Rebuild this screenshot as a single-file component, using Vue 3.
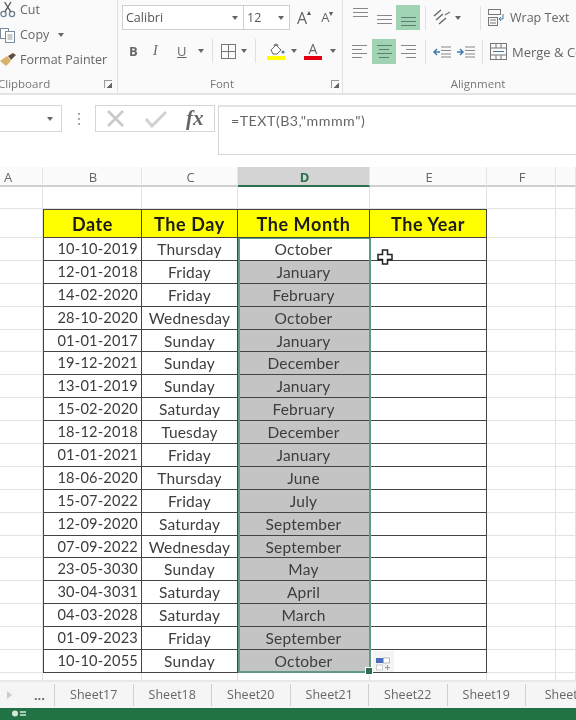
<script setup>
const columns = ["A", "B", "C", "D", "E", "F", ""];

const rows = [
  ["10-10-2019", "Thursday", "October"],
  ["12-01-2018", "Friday", "January"],
  ["14-02-2020", "Friday", "February"],
  ["28-10-2020", "Wednesday", "October"],
  ["01-01-2017", "Sunday", "January"],
  ["19-12-2021", "Sunday", "December"],
  ["13-01-2019", "Sunday", "January"],
  ["15-02-2020", "Saturday", "February"],
  ["18-12-2018", "Tuesday", "December"],
  ["01-01-2021", "Friday", "January"],
  ["18-06-2020", "Thursday", "June"],
  ["15-07-2022", "Friday", "July"],
  ["12-09-2020", "Saturday", "September"],
  ["07-09-2022", "Wednesday", "September"],
  ["23-05-3030", "Sunday", "May"],
  ["30-04-3031", "Saturday", "April"],
  ["04-03-2028", "Saturday", "March"],
  ["01-09-2023", "Friday", "September"],
  ["10-10-2055", "Sunday", "October"],
];

const tabs = ["Sheet17", "Sheet18", "Sheet20", "Sheet21", "Sheet22", "Sheet19", "Sheet2"];
</script>

<template>
  <div class="app">
    <section class="ribbon">
      <div class="group clipboard">
        <div class="group-body clip-list">
          <div class="clip-item">
            <svg width="16" height="18" viewBox="0 0 16 18" fill="none" stroke="#6d7f92" stroke-width="1.3">
              <circle cx="3.5" cy="13" r="2.6" />
              <circle cx="12" cy="13" r="2.6" />
              <path d="M4.8 10.8 11 1M10.8 10.8 4.6 1" stroke="#555" />
            </svg>
            <span>Cut</span>
          </div>
          <div class="clip-item">
            <svg width="16" height="16" viewBox="0 0 16 16" fill="#fff" stroke="#7b8a99">
              <rect x="0.5" y="1.5" width="8" height="10" />
              <rect x="5.5" y="4.5" width="9" height="11" />
              <path d="M7.5 8h5M7.5 10h5M7.5 12h5" stroke="#999" />
            </svg>
            <span>Copy</span>
            <i class="arrow copy-arrow"></i>
          </div>
          <div class="clip-item">
            <svg width="16" height="14" viewBox="0 0 16 14">
              <path d="M0 8 7 3l4 5-5 5Z" fill="#d9b36a" />
              <path d="M8 3l5-3 3 2-5 5Z" fill="#5c5140" />
            </svg>
            <span>Format Painter</span>
          </div>
        </div>
        <div class="group-label clip-label">
          <span>Clipboard</span>
          <i class="launcher"></i>
        </div>
      </div>

      <div class="group font-group">
        <div class="group-body">
          <div class="tool-row font-top">
            <div class="combo name-combo">Calibri<i class="arrow"></i></div>
            <div class="combo size-combo">12<i class="arrow"></i></div>
            <span class="grow-a big">A<sup>▴</sup></span>
            <span class="grow-a small">A<sup>▾</sup></span>
          </div>
          <div class="tool-row font-bottom">
            <b class="fmt fmt-b">B</b>
            <em class="fmt fmt-i">I</em>
            <u class="fmt fmt-u">U</u>
            <i class="arrow"></i>
            <span class="sep"></span>
            <svg class="border-icon" width="15" height="15" viewBox="0 0 15 15" fill="none" stroke="#777">
              <rect x="0.5" y="0.5" width="14" height="14" />
              <path d="M7.5 0v15M0 7.5h15" />
            </svg>
            <i class="arrow"></i>
            <span class="sep"></span>
            <svg class="fill-icon" width="20" height="20" viewBox="0 0 20 20">
              <path d="M4 9 9 4l5 5-4 4H6Z" fill="#fff" stroke="#666" />
              <path d="M7 5a2 2 0 0 1 4 0" fill="none" stroke="#666" />
              <circle cx="16" cy="11" r="1.6" fill="#4d7fa8" />
              <rect x="0" y="15" width="18" height="4" fill="#ffff00" />
            </svg>
            <i class="arrow"></i>
            <span class="color-a">A</span>
            <i class="arrow"></i>
          </div>
        </div>
        <div class="group-label font-label">
          <span>Font</span>
          <i class="launcher"></i>
        </div>
      </div>

      <div class="group align-group">
        <div class="group-body">
          <div class="tool-row align-row">
            <span class="lines lines-top"><i></i><i></i><i></i></span>
            <span class="lines lines-mid"><i></i><i></i><i></i></span>
            <span class="lines lines-bot active"><i></i><i></i><i></i></span>
            <span class="sep"></span>
            <svg class="orient" width="18" height="18" viewBox="0 0 18 18" fill="none" stroke="#666">
              <path d="M1 7 8 1M3 11l7-6M6 15l7-6" stroke-width="1.4" />
              <path d="M12 6l5-3" stroke="#5d7f9e" stroke-width="1.4" />
            </svg>
            <i class="arrow"></i>
            <span class="sep wide-sep"></span>
            <svg class="wrap-icon" width="18" height="18" viewBox="0 0 18 18" fill="none" stroke="#777">
              <rect x="0.5" y="0.5" width="12" height="5" />
              <rect x="0.5" y="8.5" width="9" height="8" />
              <path d="M2 11h6M2 14h6" />
              <path d="M15 5v5h-4m2-2-2 2 2 2" stroke="#3d78a8" />
            </svg>
            <span class="wide-label">Wrap Text</span>
          </div>
          <div class="tool-row align-row second">
            <span class="lines left"><i></i><i></i><i></i><i></i></span>
            <span class="lines center active"><i></i><i></i><i></i><i></i></span>
            <span class="lines right"><i></i><i></i><i></i><i></i></span>
            <span class="sep"></span>
            <svg class="indent" width="18" height="12" viewBox="0 0 18 12" fill="none" stroke="#888">
              <path d="M8 1h10M8 4.500h10M8 8h10M8 11h10" />
              <path d="M7 6H1m3-3L1 6l3 3" stroke="#3d78a8" stroke-width="1.4" />
            </svg>
            <svg class="indent" width="18" height="12" viewBox="0 0 18 12" fill="none" stroke="#888">
              <path d="M8 1h10M8 4.500h10M8 8h10M8 11h10" />
              <path d="M0 6h6M3 3l3 3-3 3" stroke="#3d78a8" stroke-width="1.4" />
            </svg>
            <span class="sep indent-sep"></span>
            <svg class="wrap-icon" width="18" height="18" viewBox="0 0 18 18" fill="none" stroke="#777">
              <rect x="0.500" y="0.500" width="16" height="16" />
              <path d="M0 5h17M0 12h17M6 0v5M11 0v5M6 12v5M11 12v5" />
              <path d="M3 8.500h11" stroke="#3d78a8" />
            </svg>
            <span class="wide-label merge-label">Merge &amp; Center</span>
          </div>
        </div>
        <div class="group-label align-label"><span>Alignment</span></div>
      </div>
    </section>

    <section class="formula-bar">
      <div class="name-box"><i class="arrow"></i></div>
      <div class="grip"><i></i><i></i><i></i></div>
      <div class="fx-buttons">
        <svg width="20" height="18" viewBox="0 0 20 18" fill="none" stroke="#c9c9c9" stroke-width="2.600">
          <path d="M2 1l15 15M17 1 2 16" />
        </svg>
        <svg width="22" height="18" viewBox="0 0 22 18" fill="none" stroke="#d2d2d2" stroke-width="3">
          <path d="M1 9l6 7L21 2" />
        </svg>
        <span class="fx">fx</span>
      </div>
      <div class="formula-input">=TEXT(B3,"mmmm")</div>
    </section>

    <section class="sheet">
      <div class="sheet-grid">
        <div
          v-for="(col, i) in columns"
          :key="'col' + i"
          class="col-head"
          :class="{ current: col === 'D', 'col-a': col === 'A' }"
        >{{ col }}</div>

        <div v-for="i in 7" :key="'blank' + i" class="cell"></div>

        <div class="cell"></div>
        <div class="cell boxed title first">Date</div>
        <div class="cell boxed title">The Day</div>
        <div class="cell boxed title">The Month</div>
        <div class="cell boxed title">The Year</div>
        <div class="cell"></div>
        <div class="cell"></div>

        <template v-for="(row, r) in rows" :key="r">
          <div class="cell"></div>
          <div class="cell boxed first date">{{ row[0] }}</div>
          <div class="cell boxed">{{ row[1] }}</div>
          <div class="cell boxed" :class="{ filled: r > 0 }">{{ row[2] }}</div>
          <div class="cell boxed"></div>
          <div class="cell"></div>
          <div class="cell"></div>
        </template>

        <div v-for="i in 7" :key="'end' + i" class="cell last"></div>
      </div>

      <div class="selection"><i class="fill-handle"></i></div>

      <svg class="cursor" width="16" height="16" viewBox="0 0 16 16">
        <path d="M5.500 1h5v4.500H15v5h-4.500V15h-5v-4.500H1v-5h4.500Z" fill="#fff" stroke="#222" stroke-width="1.500" />
      </svg>

      <div class="quick-analysis">
        <svg width="14" height="14" viewBox="0 0 14 14">
          <rect x="0" y="1" width="7" height="5" fill="#4a6fc0" />
          <rect x="7.500" y="1" width="6" height="5" fill="#fff" stroke="#999" stroke-width="0.700" />
          <rect x="0.500" y="8" width="6" height="5" fill="#fff" stroke="#bbb" stroke-width="0.700" />
          <path d="M9 10.500h5M11.500 8v5" stroke="#999" />
        </svg>
      </div>
    </section>

    <section class="tab-bar">
      <span class="tab-prev"></span>
      <span class="tab-more">...</span>
      <div v-for="tab in tabs" :key="tab" class="tab">{{ tab }}</div>
    </section>

    <footer class="status-bar">
      <svg width="16" height="8" viewBox="0 0 16 8">
        <circle cx="4" cy="3.500" r="3" fill="#d5e8dc" />
        <path d="M9 2h6M9 5h6" stroke="#d5e8dc" stroke-width="1.500" />
      </svg>
    </footer>
  </div>
</template>

<style>
html,
body {
  margin: 0;
  background: #fff;
}
</style>

<style scoped>
.app {
  width: 576px;
  height: 720px;
  overflow: hidden;
  background: #fff;
  font-family: "Open Sans", "Liberation Sans", sans-serif;
  color: #555;
  display: flex;
  flex-direction: column;
  filter: blur(0.35px);
}

.arrow {
  display: inline-block;
  width: 0;
  height: 0;
  border-left: 3.500px solid transparent;
  border-right: 3.500px solid transparent;
  border-top: 4px solid #666;
}

/* ribbon */
.ribbon {
  height: 95px;
  box-sizing: border-box;
  border-bottom: 2px solid #e4e4e4;
  background: #fafafa;
  display: flex;
  flex-shrink: 0;
}

.group {
  display: flex;
  flex-direction: column;
  border-right: 1px solid #e2e2e2;
  box-sizing: border-box;
}

.group-body {
  height: 76px;
}

.group-label {
  position: relative;
  text-align: center;
  font-size: 11.500px;
  line-height: 16px;
  color: #777;
}

.launcher {
  position: absolute;
  right: 3px;
  top: 4px;
  width: 7px;
  height: 7px;
  border-left: 1px solid #999;
  border-top: 1px solid #999;
  background: linear-gradient(135deg, transparent 60%, #666 60%);
}

.clipboard {
  width: 118px;
}

.clip-list {
  margin-top: -3px;
}

.clip-item {
  height: 25px;
  display: flex;
  align-items: center;
  gap: 4px;
  font-size: 12.500px;
  color: #666;
  white-space: nowrap;
}

.clip-item svg {
  flex-shrink: 0;
}

.copy-arrow {
  margin-left: 5px;
}

.clip-label {
  margin-top: 3px;
  text-align: left;
  margin-left: -2px;
}

.clip-label .launcher {
  right: 5px;
}

.font-group {
  width: 225px;
  padding-left: 4px;
}

.font-label {
  padding-right: 20px;
}

.tool-row {
  display: flex;
  align-items: center;
}

.font-top {
  padding-top: 5px;
  height: 25px;
}

.combo {
  height: 25px;
  box-sizing: border-box;
  border: 1px solid #cfcfcf;
  background: #fff;
  font-size: 12.500px;
  color: #555;
  display: flex;
  align-items: center;
  justify-content: space-between;
  padding: 0 5px 0 3px;
}

.name-combo {
  width: 122px;
}

.size-combo {
  width: 46px;
  border-left: 0;
}

.grow-a {
  color: #666;
  line-height: 1;
  display: flex;
}

.grow-a sup {
  font-size: 8px;
  margin-top: -2px;
  color: #555;
}

.grow-a.big {
  font-size: 16px;
  margin-left: 7px;
}

.grow-a.small {
  font-size: 13px;
  margin-left: 10px;
}

.font-bottom {
  height: 24px;
  margin-top: 9px;
  padding-left: 5px;
  font-size: 13px;
  color: #666;
}

.fmt {
  width: 24px;
  text-align: left;
  padding-left: 2px;
  box-sizing: border-box;
  font-family: "Liberation Serif", serif;
  font-size: 14px;
}

.fmt-b {
  font-family: "Open Sans", sans-serif;
  font-size: 13px;
}

.fmt-u {
  font-family: "Open Sans", sans-serif;
  width: 21px;
  font-size: 13px;
}

.sep {
  width: 1px;
  height: 24px;
  background: #e0e0e0;
}

.font-bottom .arrow {
  margin-left: 2px;
}

.font-bottom .sep {
  margin: 0 8px 0 8px;
}

.border-icon {
  margin-right: 3px;
}

.fill-icon {
  margin-left: 3px;
  margin-right: 2px;
}

.font-bottom .fill-icon + .arrow {
  margin-right: 7px;
}

.color-a {
  width: 18px;
  text-align: center;
  font-size: 14px;
  line-height: 14px;
  border-bottom: 4px solid #e3000f;
  margin-right: 6px;
}

.align-group {
  flex: 1;
  border-right: 0;
  min-width: 0;
}

.align-row {
  height: 25px;
  padding-top: 5px;
  white-space: nowrap;
}

.align-row.second {
  padding-top: 9px;
}

.lines {
  width: 24px;
  height: 25px;
  box-sizing: border-box;
  display: flex;
  flex-direction: column;
  gap: 3px;
  align-items: center;
  justify-content: center;
  flex-shrink: 0;
}

.lines:first-child {
  margin-left: 5px;
}

.lines i {
  display: block;
  width: 15px;
  height: 1px;
  background: #888;
}

.lines.active {
  background: #9fd3b4;
}

.lines-top {
  justify-content: flex-start;
  padding-top: 3px;
}

.lines-mid {
  padding-top: 4px;
}

.lines-bot {
  justify-content: flex-end;
  padding-bottom: 4px;
}

.lines-bot i,
.center i {
  background: #5f7f6e;
}

.left {
  align-items: flex-start;
  padding-left: 4px;
}

.left i:nth-child(even),
.right i:nth-child(even),
.center i:nth-child(even) {
  width: 10px;
}

.right {
  align-items: flex-end;
  padding-right: 4px;
}

.align-row .sep {
  margin-left: 5px;
  flex-shrink: 0;
}

.orient {
  margin: 0 4px 0 7px;
  flex-shrink: 0;
}

.align-row .wide-sep {
  margin-left: 19px;
}

.wrap-icon {
  margin-left: 7px;
  margin-right: 4px;
  flex-shrink: 0;
}

.indent {
  margin-left: 7px;
  flex-shrink: 0;
}

.indent + .indent {
  margin-left: 6px;
}

.align-row .indent-sep {
  margin-left: 7px;
}

.wide-label {
  font-size: 12.500px;
  color: #666;
}

.merge-label {
  font-size: 13px;
}

.align-label {
  width: 270px;
}

/* formula bar */
.formula-bar {
  height: 72px;
  flex-shrink: 0;
  display: flex;
  align-items: flex-start;
  padding-top: 10px;
  box-sizing: border-box;
}

.name-box {
  width: 62px;
  height: 27px;
  box-sizing: border-box;
  border: 1px solid #d6d6d6;
  border-left: 0;
  display: flex;
  align-items: center;
  justify-content: flex-end;
  padding-right: 8px;
}

.grip {
  width: 33px;
  height: 27px;
  display: flex;
  flex-direction: column;
  align-items: center;
  justify-content: center;
  gap: 3px;
}

.grip i {
  width: 2px;
  height: 2px;
  background: #aaa;
}

.fx-buttons {
  width: 120px;
  height: 27px;
  box-sizing: border-box;
  border: 1px solid #d6d6d6;
  display: flex;
  align-items: center;
  padding-left: 10px;
  gap: 19px;
}

.fx {
  font-family: "Liberation Serif", serif;
  font-style: italic;
  font-weight: bold;
  font-size: 21px;
  color: #666;
  line-height: 1;
}

.formula-input {
  flex: 1;
  height: 50px;
  margin-left: 3px;
  box-sizing: border-box;
  border-left: 1px solid #d6d6d6;
  border-top: 2px solid #e2e2e2;
  border-bottom: 1px solid #d6d6d6;
  padding: 5px 0 0 12px;
  font-family: Lato, "Open Sans", sans-serif;
  font-size: 14.200px;
  letter-spacing: 0.500px;
  line-height: 18px;
  color: #666;
}

/* sheet */
.sheet {
  position: relative;
  flex-shrink: 0;
  height: 513px;
}

.sheet-grid {
  display: grid;
  grid-template-columns: 43px 99px 96px 132px 117px 69px 20px;
  grid-template-rows: 20px 22px 29px repeat(19, 22.9px) 7px;
}

.col-head {
  border-right: 1px solid #e6e6e6;
  border-bottom: 2px solid #cfcfcf;
  background: #fbfbfb;
  box-sizing: border-box;
  text-align: center;
  padding-left: 2px;
  font-size: 13px;
  line-height: 20px;
  color: #666;
}

.col-head.col-a {
  text-align: left;
  padding-left: 4px;
}

.col-head.current {
  background: #d4d4d4;
  border-bottom-color: #2d6e4e;
  font-weight: 700;
  color: #2a7049;
}

.cell {
  box-sizing: border-box;
  border-right: 1px solid #e2e2e2;
  border-bottom: 1px solid #e2e2e2;
  min-width: 0;
}

.cell.last {
  border-bottom: 0;
}

.boxed {
  border-right: 1.500px solid #444;
  border-bottom: 1.500px solid #444;
  text-align: center;
  font-family: Lato, "Open Sans", sans-serif;
  font-size: 15.500px;
  letter-spacing: 0.200px;
  line-height: 22px;
  color: #3d3d3d;
  white-space: nowrap;
}

.boxed.first {
  border-left: 1.500px solid #444;
}

.boxed.date {
  text-align: right;
  padding-right: 3px;
  font-size: 14.600px;
}

.title {
  background: #ffff00;
  border-top: 1.500px solid #444;
  font-size: 18px;
  font-weight: 700;
  letter-spacing: 0.600px;
  line-height: 28px;
  color: #1c1c1c;
}

.filled {
  background: #c4c4c4;
}

.selection {
  position: absolute;
  left: 238px;
  top: 71px;
  width: 133px;
  height: 435px;
  box-sizing: border-box;
  border: 2px solid #5d9c80;
  border-top-width: 1px;
  pointer-events: none;
}

.fill-handle {
  position: absolute;
  right: -4px;
  bottom: -4px;
  width: 6px;
  height: 6px;
  background: #2d6e4e;
  border: 1px solid #fff;
}

.cursor {
  position: absolute;
  left: 377px;
  top: 82px;
}

.quick-analysis {
  position: absolute;
  left: 373px;
  top: 484px;
  width: 21px;
  height: 21px;
  box-sizing: border-box;
  padding: 3px;
  background: #f4f4f4;
}

/* tabs */
.tab-bar {
  height: 28px;
  flex-shrink: 0;
  box-sizing: border-box;
  border-top: 2px solid #e8e8e8;
  background: #f5f5f5;
  display: flex;
  align-items: center;
  white-space: nowrap;
  overflow: hidden;
}

.tab-prev {
  flex-shrink: 0;
  width: 0;
  height: 0;
  margin-left: 7px;
  border-top: 4px solid transparent;
  border-bottom: 4px solid transparent;
  border-left: 5px solid #ccc;
}

.tab-more {
  flex-shrink: 0;
  width: 42px;
  box-sizing: border-box;
  text-align: right;
  padding-right: 9px;
  font-size: 13px;
  font-weight: 700;
  line-height: 14px;
  color: #666;
}

.tab {
  width: 78.500px;
  flex-shrink: 0;
  box-sizing: border-box;
  border-left: 1px solid #cfcfcf;
  text-align: center;
  font-size: 12.500px;
  line-height: 22px;
  color: #666;
}

.status-bar {
  flex: 1;
  background: #217346;
  display: flex;
  align-items: center;
  padding-left: 11px;
}
</style>
